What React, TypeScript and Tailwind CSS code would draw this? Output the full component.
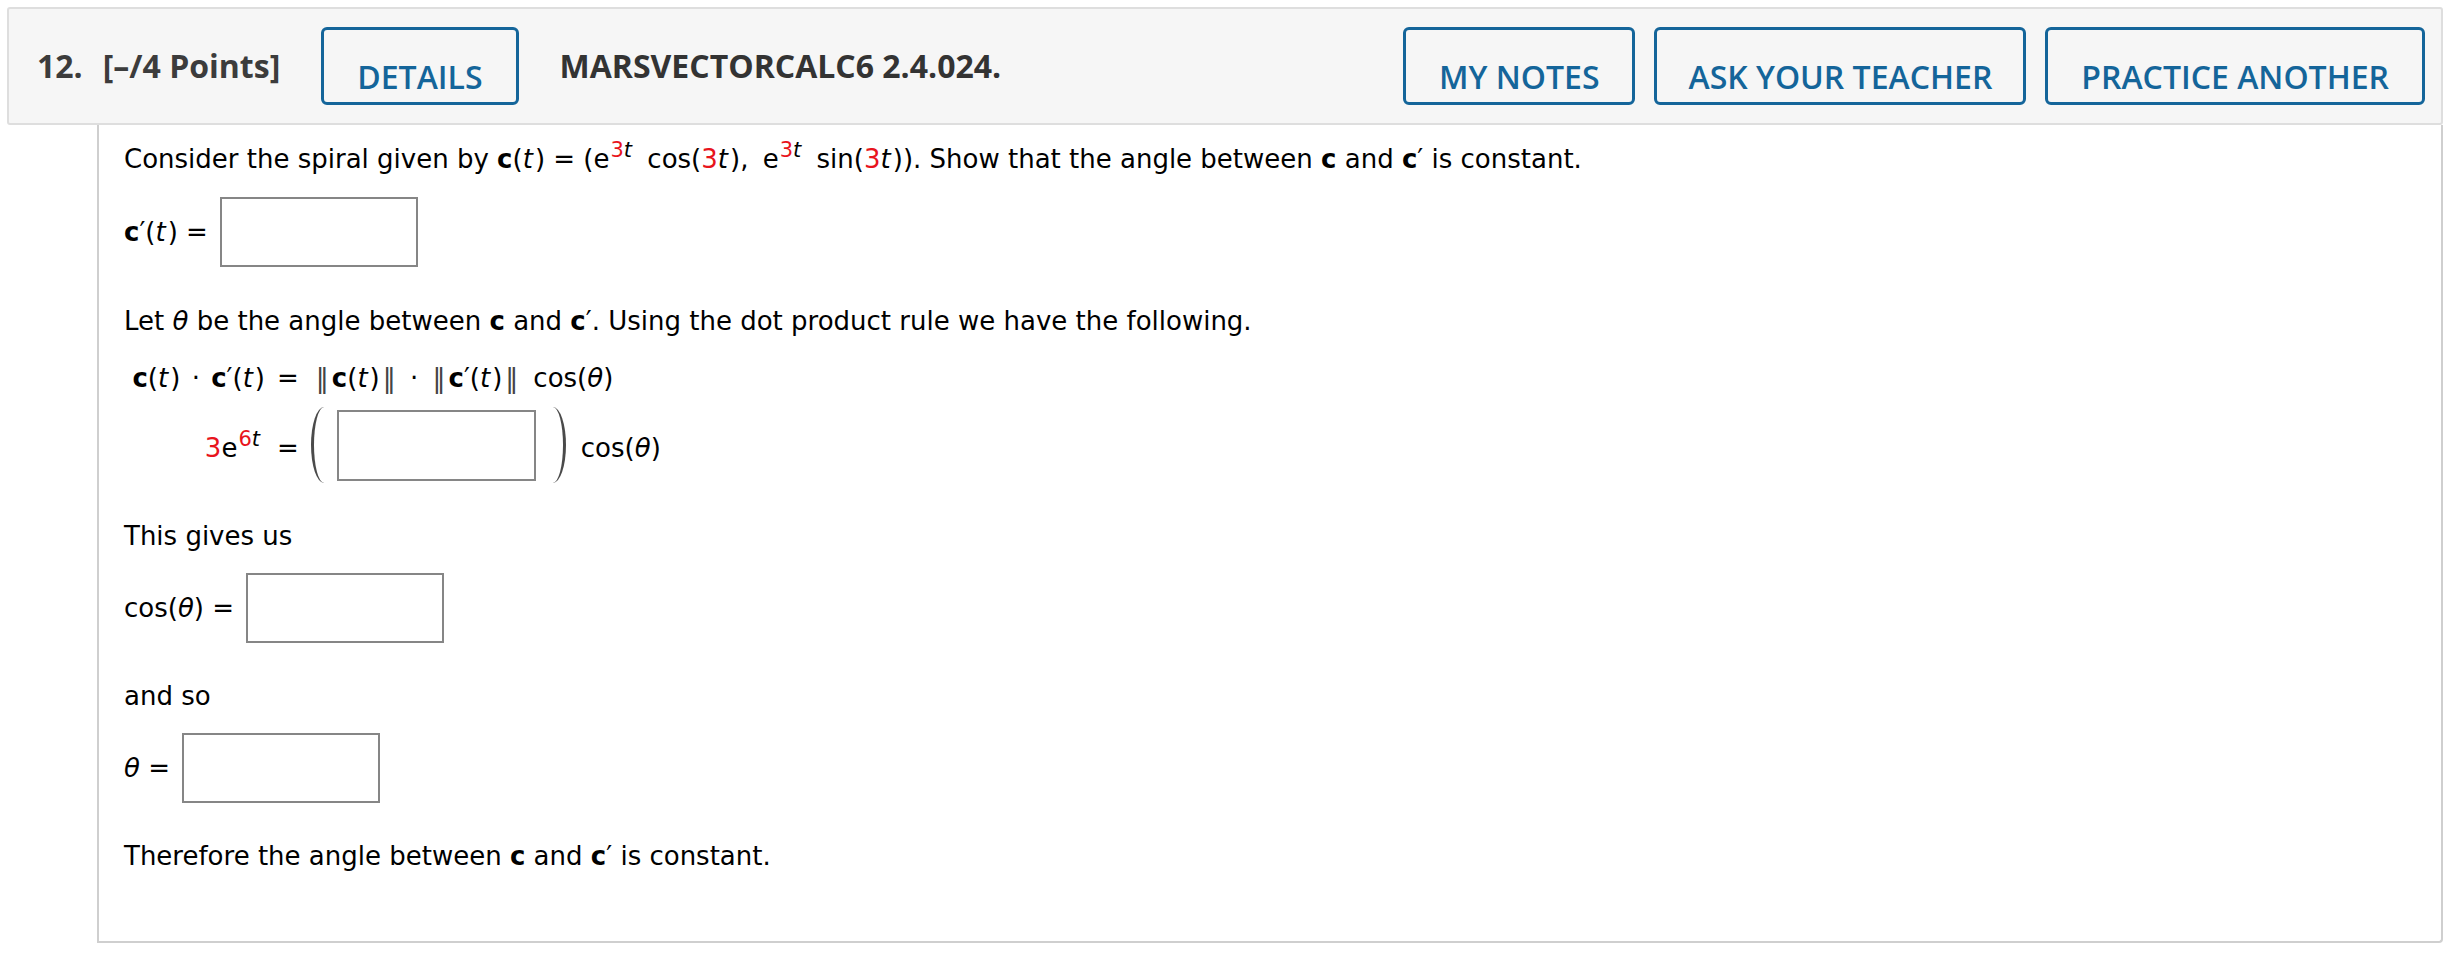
import type { ReactNode } from "react";

const red = "text-[#e8141c]";

function Sup({ children, pad = "pr-[3px]" }: { children: ReactNode; pad?: string }) {
  return <span className={`relative -top-[11px] ml-[1px] ${pad} text-[21px] leading-none`}>{children}</span>;
}

function B({ children }: { children: ReactNode }) {
  return <span className="font-bold">{children}</span>;
}

// math italic t, with a little italic correction after it
function T() {
  return <i className="mr-[2px]">t</i>;
}

function Theta() {
  return <i>θ</i>;
}

function Norm() {
  return <span className="mx-[3px] text-[#444]">‖</span>;
}

function AnswerBox() {
  return <input type="text" className="h-[70px] w-[198px] shrink-0 border-2 border-[#868686] bg-white" />;
}

function HeadButton({ label, pad = "px-[33px]" }: { label: string; pad?: string }) {
  return (
    <button
      className={`flex h-[78px] items-end rounded-[6px] border-[3px] border-[#14659a] ${pad} pb-[9px] text-[32px] leading-[32px] font-semibold text-[#14659a]`}
    >
      {label}
    </button>
  );
}

export default function App() {
  return (
    <div className="min-h-screen bg-white">
      <div className="ml-[7px] mt-[7px] flex h-[118px] w-[2436px] items-center rounded-[3px] border-2 border-[#dedede] bg-[#f6f6f6] pl-[28px] pr-[16px] font-['Open_Sans',sans-serif] text-[32px] leading-[32px]">
        <span className="font-bold text-[#3c3c3c]">12.</span>
        <span className="ml-[20px] font-bold text-[#3c3c3c]">[–/4 Points]</span>
        <div className="ml-[41px]">
          <HeadButton label="DETAILS" />
        </div>
        <span className="ml-[41px] font-bold text-[#333]">MARSVECTORCALC6 2.4.024.</span>
        <div className="ml-auto flex gap-[19px]">
          <HeadButton label="MY NOTES" />
          <HeadButton label="ASK YOUR TEACHER" pad="px-[31px]" />
          <HeadButton label="PRACTICE ANOTHER" />
        </div>
      </div>

      <div className="ml-[97px] h-[818px] w-[2346px] rounded-br-[4px] border-x-2 border-b-2 border-[#cfcfcf] pl-[25px] pt-[16px] font-['DejaVu_Sans',sans-serif] text-[26px] leading-[36px] text-black">
        <p>
          Consider the spiral given by <B>c</B>(<T />) = (e
          <Sup pad="pr-[5px]">
            <span className={red}>3</span>
            <T />
          </Sup>{" "}
          cos(<span className={red}>3</span>
          <T />
          ),<span className="ml-[6px]" /> e
          <Sup pad="pr-[5px]">
            <span className={red}>3</span>
            <T />
          </Sup>{" "}
          sin(<span className={red}>3</span>
          <T />
          )). Show that the angle between <B>c</B> and <B>c</B>′ is constant.
        </p>

        <div className="mt-[20px] flex items-center">
          <span>
            <B>c</B>′(<T />) =
          </span>
          <div className="ml-[12px]">
            <AnswerBox />
          </div>
        </div>

        <p className="mt-[36px]">
          Let <Theta /> be the angle between <B>c</B> and <B>c</B>′. Using the dot product rule we have the following.
        </p>

        <div className="mt-[21px] grid w-fit grid-cols-[141px_auto_auto] items-center gap-x-[12px]">
          <span className="justify-self-end whitespace-nowrap">
            <B>c</B>(<T />)<span className="mx-[3px]">{" · "}</span>
            <B>c</B>′(<T />)
          </span>
          <span>=</span>
          <span className="whitespace-nowrap pl-[2px]">
            <Norm />
            <B>c</B>(<T />)
            <Norm /> <span className="mx-[3px]">·</span> <Norm />
            <B>c</B>′(<T />)
            <Norm />
            <span className="ml-[12px]">
              cos(<Theta />)
            </span>
          </span>

          <span className="mt-[11px] justify-self-end whitespace-nowrap pt-[6px]">
            <span className={red}>3</span>e
            <Sup>
              <span className={red}>6</span>
              <T />
            </Sup>
          </span>
          <span className="mt-[11px] pt-[6px]">=</span>
          <div className="mt-[11px] flex items-center">
            <span className="h-[76px] w-[13px] rounded-l-[100%_50%] border-l-[3px] border-[#4a4a4a]" />
            <div className="ml-[13px] mr-[17px]">
              <input type="text" className="h-[71px] w-[199px] border-2 border-[#868686] bg-white" />
            </div>
            <span className="h-[76px] w-[13px] rounded-r-[100%_50%] border-r-[3px] border-[#4a4a4a]" />
            <span className="ml-[15px] pt-[6px]">
              cos(<Theta />)
            </span>
          </div>
        </div>

        <p className="mt-[35px]">This gives us</p>

        <div className="mt-[19px] flex items-center">
          <span>
            cos(<Theta />) =
          </span>
          <div className="ml-[12px]">
            <AnswerBox />
          </div>
        </div>

        <p className="mt-[35px]">and so</p>

        <div className="mt-[19px] flex items-center">
          <span>
            <Theta /> =
          </span>
          <div className="ml-[12px]">
            <AnswerBox />
          </div>
        </div>

        <p className="mt-[35px]">
          Therefore the angle between <B>c</B> and <B>c</B>′ is constant.
        </p>
      </div>
    </div>
  );
}
